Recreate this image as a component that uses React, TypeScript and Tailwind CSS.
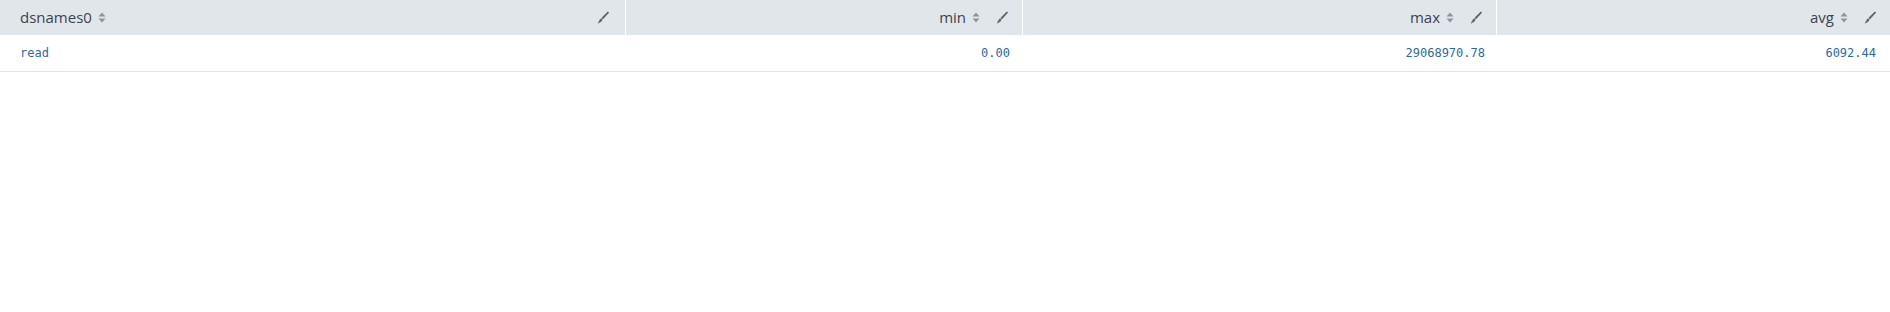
import React from 'react';

const columns = [
  { key: 'dsnames0', width: 'w-[626px]', align: 'left', value: 'read' },
  { key: 'min', width: 'w-[397px]', align: 'right', value: '0.00' },
  { key: 'max', width: 'w-[474px]', align: 'right', value: '29068970.78' },
  { key: 'avg', width: 'flex-1', align: 'right', value: '6092.44' },
];

function SortIcon() {
  return (
    <svg width="8" height="11" viewBox="0 0 8 11" className="shrink-0">
      <path d="M4 0.5 L7.5 4.5 H0.5 Z" fill="#8d959e" />
      <path d="M4 10.5 L7.5 6.5 H0.5 Z" fill="#8d959e" />
    </svg>
  );
}

function BrushIcon() {
  return (
    <svg width="13" height="13" viewBox="0 0 13 13" className="shrink-0">
      <path d="M12.2 1.6 L6 8.2 L4.6 6.8 L10.8 0.4 Z" fill="#5c6670" />
      <path d="M4.2 7.2 L5.6 8.6 C5 10.8 3.4 12 0.8 12.4 C1.8 10.8 2.2 8.4 4.2 7.2 Z" fill="#636a72" />
      <path d="M0.8 12.4 C1.3 11.6 1.6 11 1.9 10.3 L2.9 11.3 C2.2 11.8 1.6 12.1 0.8 12.4 Z" fill="#a27a5c" />
    </svg>
  );
}

export default function App() {
  return (
    <div className="w-[1890px] h-[312px] bg-white font-['Open_Sans',sans-serif]">
      <div className="flex h-[35px] bg-[#e1e6eb]">
        {columns.map((col, i) => (
          <div
            key={col.key}
            className={`${col.width} flex items-center ${i < columns.length - 1 ? 'border-r border-white' : ''} ${
              col.align === 'left' ? 'pl-5 pr-[15px]' : 'pr-[13px]'
            }`}
          >
            {col.align === 'left' ? (
              <>
                <span className="text-[15px] text-[#3c444d]">{col.key}</span>
                <span className="ml-[6px]"><SortIcon /></span>
                <span className="ml-auto"><BrushIcon /></span>
              </>
            ) : (
              <div className="ml-auto flex items-center">
                <span className="text-[15px] text-[#3c444d]">{col.key}</span>
                <span className="ml-[6px]"><SortIcon /></span>
                <span className="ml-[16px]"><BrushIcon /></span>
              </div>
            )}
          </div>
        ))}
      </div>
      <div className="flex h-[37px] border-b border-[#e1e6eb]">
        {columns.map((col, i) => (
          <div
            key={col.key}
            className={`${col.width} flex items-center font-['DejaVu_Sans_Mono',monospace] text-[12px] text-[#2d6aa3] ${
              i === 0 ? 'pl-5' : 'justify-end pr-[14px]'
            } ${i < columns.length - 1 ? 'mr-px' : ''}`}
          >
            {col.value}
          </div>
        ))}
      </div>
    </div>
  );
}
